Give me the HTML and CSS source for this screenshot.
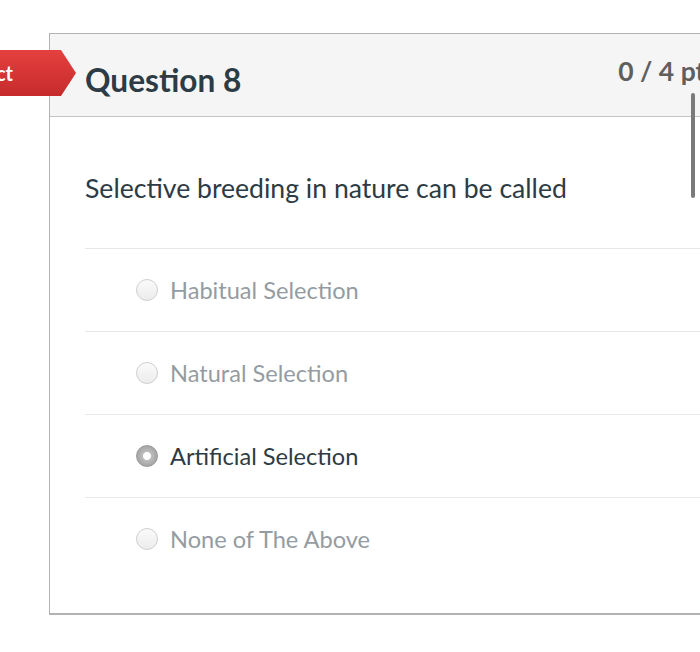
FILE: index.html
```html
<!DOCTYPE html>
<html>
<head>
<meta charset="utf-8">
<link rel="stylesheet" href="styles.css">
</head>
<body>
<div class="card">
  <div class="flag"><span>Incorrect</span></div>
  <div class="scrollbar"></div>
  <div class="card-header">
    <h2 class="title">Question 8</h2>
    <span class="points">0 / 4 pts</span>
  </div>
  <div class="card-body">
    <p class="question">Selective breeding in nature can be called</p>
    <ul class="answers">
      <li class="answer"><span class="radio"></span><span class="label">Habitual Selection</span></li>
      <li class="answer"><span class="radio"></span><span class="label">Natural Selection</span></li>
      <li class="answer selected"><span class="radio"></span><span class="label">Artificial Selection</span></li>
      <li class="answer"><span class="radio"></span><span class="label">None of The Above</span></li>
    </ul>
  </div>
</div>
</body>
</html>
```

FILE: styles.css
```css
html, body {
  margin: 0;
  padding: 0;
  background: #fff;
  overflow: hidden;
  width: 700px;
  height: 652px;
  font-family: Lato, "Open Sans", sans-serif;
}

.card {
  position: relative;
  margin: 33px 0 0 49px;
  width: 720px;
  border: 1px solid #b3b3b3;
  border-bottom-width: 2px;
  border-right: none;
}

.flag {
  position: absolute;
  left: -120px;
  top: 16px;
  width: 146px;
  height: 46px;
  background: linear-gradient(#e4403f, #c62b2b);
  clip-path: polygon(0 0, 131px 0, 146px 23px, 131px 46px, 0 46px);
  display: flex;
  align-items: center;
  justify-content: flex-end;
  padding-right: 63px;
  box-sizing: border-box;
}

.flag span {
  color: #fff;
  font-weight: 700;
  font-size: 20px;
}

.scrollbar {
  position: absolute;
  left: 641px;
  top: 59px;
  width: 4px;
  height: 105px;
  border-radius: 2px;
  background: #7a7a7a;
}

.card-header {
  display: flex;
  align-items: center;
  height: 82px;
  background: #f5f5f5;
  border-bottom: 1px solid #c4c4c4;
  padding: 0 0 0 35px;
}

.title {
  margin: 0;
  font-size: 31.6px;
  font-weight: 700;
  color: #2d3b45;
  padding-top: 10px;
}

.points {
  margin-left: auto;
  margin-right: 53px;
  align-self: flex-start;
  padding-top: 21px;
  font-size: 26.5px;
  font-weight: 700;
  color: #5f5f5f;
}

.card-body {
  padding: 0 0 0 35px;
  height: 496px;
}

.question {
  margin: 0;
  padding: 56px 0 0;
  height: 75px;
  font-size: 26.6px;
  line-height: 30px;
  color: #2d3b45;
  border-bottom: 1px solid #e8e8e8;
}

.answers {
  list-style: none;
  margin: 0;
  padding: 0;
}

.answer {
  display: flex;
  align-items: center;
  height: 82px;
  border-bottom: 1px solid #e8e8e8;
  padding-left: 51px;
}

.answer:last-child {
  border-bottom: none;
}

.radio {
  width: 20px;
  height: 20px;
  border-radius: 50%;
  border: 1px solid #cfcfcf;
  background: linear-gradient(#fafafa, #ececec);
  margin-right: 12px;
  flex: none;
}

.label {
  font-size: 23.6px;
  color: #959ca1;
}

.selected .label {
  color: #2d3b45;
}

.selected .radio {
  border-color: #9a9a9a;
  background: radial-gradient(circle, #fff 0 3.5px, #bcbcbc 4.5px, #a6a6a6 10px);
}
```
